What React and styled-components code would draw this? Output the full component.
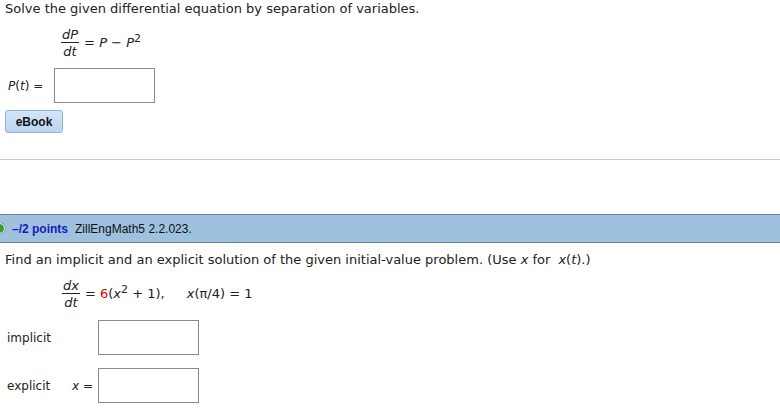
import React from "react";
import styled, { createGlobalStyle } from "styled-components";

const Global = createGlobalStyle`
  html, body { margin: 0; padding: 0; background: #fff; }
  body { font-family: "DejaVu Sans", Verdana, sans-serif; color: #222; overflow: hidden; }
`;

const Page = styled.div`
  width: 780px;
  height: 412px;
  display: flex;
  flex-direction: column;
`;

const Section = styled.div`
  display: flex;
  flex-direction: column;
  padding: 0 5px;
`;

const Prompt = styled.div`
  font-size: 13px;
  line-height: 16px;
  margin-top: ${(p) => p.$top || 0}px;
  white-space: nowrap;
`;

const Equation = styled.div`
  display: flex;
  align-items: center;
  font-size: 13px;
  margin-left: ${(p) => p.$indent}px;
  margin-top: ${(p) => p.$top}px;
  gap: 5px;
`;

const Fraction = styled.span`
  display: inline-flex;
  flex-direction: column;
  align-items: center;
  font-style: italic;
  line-height: 13px;
`;

const Num = styled.span`
  padding: 0 1px 1px;
  border-bottom: 1px solid #222;
`;

const Den = styled.span`
  padding: 2px 1px 0;
`;

const Rhs = styled.span`
  white-space: pre;
  margin-top: -2px;
`;

const I = styled.i``;

const Gap = styled.span`
  display: inline-block;
  width: ${(p) => p.$w}px;
`;

const Sup = styled.sup`
  font-size: 11px;
  line-height: 0;
  vertical-align: 5px;
`;

const Red = styled.span`
  color: #e00000;
`;

const AnswerRow = styled.div`
  display: flex;
  align-items: center;
  font-size: 12px;
  margin-top: ${(p) => p.$top}px;
`;

const Label = styled.span`
  width: ${(p) => p.$w}px;
  padding-left: ${(p) => p.$pl || 0}px;
  flex-shrink: 0;
  white-space: pre;
`;

const Box = styled.div`
  width: 99px;
  height: 33px;
  border: 1px solid #8a8a8a;
  background: #fff;
`;

const EBook = styled.button`
  align-self: flex-start;
  margin-top: 7px;
  width: 58px;
  height: 23px;
  padding: 0;
  border: 1px solid #8fb1d9;
  border-radius: 3px;
  background: linear-gradient(#d3e4f8, #bcd5f2);
  font-family: "Liberation Sans", Arial, sans-serif;
  font-weight: bold;
  font-size: 12px;
  color: #111;
`;

const Divider = styled.div`
  height: 1px;
  background: #cccccc;
  margin-top: 26px;
`;

const HeaderBar = styled.div`
  margin-top: 54px;
  height: 27px;
  background: #9dc1df;
  border-top: 1px solid #6f8294;
  border-bottom: 1px solid #6f8294;
  display: flex;
  align-items: center;
  position: relative;
  font-family: "Liberation Sans", Arial, sans-serif;
  font-size: 12px;
  padding-left: 12px;
  gap: 7px;
`;

const Dot = styled.span`
  position: absolute;
  left: -6px;
  top: 8px;
  width: 9px;
  height: 9px;
  border-radius: 50%;
  background: #3a9a3a;
  border: 1px solid #e8f0e8;
  box-shadow: 0 0 0 1px #8aa;
`;

const Points = styled.span`
  color: #1a1ab8;
  font-weight: bold;
`;

const Code = styled.span`
  color: #111;
`;

export default function App() {
  return (
    <Page>
      <Global />
      <Section>
        <Prompt $top={1}>Solve the given differential equation by separation of variables.</Prompt>
        <Equation $indent={56} $top={11}>
          <Fraction>
            <Num>dP</Num>
            <Den>dt</Den>
          </Fraction>
          <Rhs>
            = <I>P</I> − <I>P</I>
            <Sup>2</Sup>
          </Rhs>
        </Equation>
        <AnswerRow $top={10}>
          <Label $w={46} $pl={3}>
            <I>P</I>(<I>t</I>) =
          </Label>
          <Box />
        </AnswerRow>
        <EBook>eBook</EBook>
      </Section>
      <Divider />
      <HeaderBar>
        <Dot />
        <Points>–/2 points</Points>
        <Code>ZillEngMath5 2.2.023.</Code>
      </HeaderBar>
      <Section>
        <Prompt $top={9}>
          Find an implicit and an explicit solution of the given initial-value problem. (Use <I>x</I> for<Gap $w={8} />
          <I>x</I>(<I>t</I>).)
        </Prompt>
        <Equation $indent={57} $top={11}>
          <Fraction>
            <Num>dx</Num>
            <Den>dt</Den>
          </Fraction>
          <Rhs>
            = <Red>6</Red>(<I>x</I>
            <Sup>2</Sup> + 1),<Gap $w={22} /><I>x</I>(π/4) = 1
          </Rhs>
        </Equation>
        <AnswerRow $top={11}>
          <Label $w={91} $pl={2}>implicit</Label>
          <Box />
        </AnswerRow>
        <AnswerRow $top={13}>
          <Label $w={65} $pl={2}>explicit</Label>
          <Label $w={26}>
            <I>x</I> =
          </Label>
          <Box />
        </AnswerRow>
      </Section>
    </Page>
  );
}
